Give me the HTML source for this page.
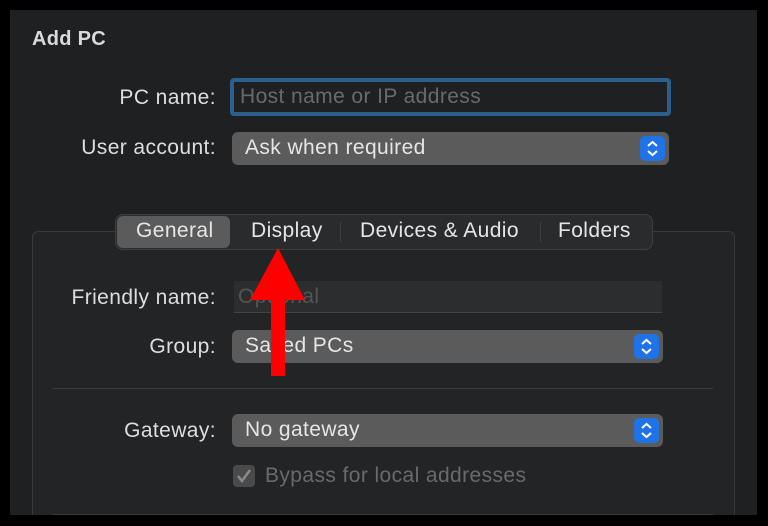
<!DOCTYPE html>
<html><head><style>
*{margin:0;padding:0;box-sizing:border-box}
body{width:768px;height:526px;background:#000;position:relative;overflow:hidden;font-family:"Liberation Sans",sans-serif;color:#dcdcdc}
.a{position:absolute}
.panel{left:10px;top:10px;width:747px;height:505px;background:#1f2022}
.t{font-size:21px;letter-spacing:0.4px}
.lbl{font-size:21px;letter-spacing:0.4px;color:#dedede;text-align:right;width:200px}
.pop{background:#5b5b5b;border-radius:6px;height:33px;font-size:21px;letter-spacing:0.4px;color:#e6e6e6;padding-left:13px;line-height:32px}
.step{position:absolute;right:4px;top:4px;width:25px;height:25px;background:#1f73e6;border-radius:5px}
</style></head><body>
<div class="a panel"></div>
<div class="a" style="left:32px;top:28px;font-size:20px;letter-spacing:0.3px;font-weight:bold;color:#dadada">Add PC</div>

<div class="a lbl" style="left:16px;top:86px">PC name:</div>
<div class="a t" style="left:230px;top:78px;width:441px;height:38px;border:4px solid #2a5f8e;border-radius:4px;background:#1f2022;color:#6a6a6a;padding-left:6px;line-height:30px">Host name or IP address</div>

<div class="a lbl" style="left:16px;top:136px">User account:</div>
<div class="a pop" style="left:232px;top:132px;width:437px">Ask when required<div class="step"><svg width="25" height="25"><path d="M8 10 L12.5 6 L17 10 M8 15 L12.5 19 L17 15" stroke="#fff" stroke-width="2" fill="none"/></svg></div></div>

<div class="a" style="left:32px;top:231px;width:703px;height:284px;border:1px solid #393a3c;border-bottom:none;border-radius:6px 6px 0 0;background:#232426"></div>
<div class="a" style="left:115px;top:214px;width:538px;height:36px;background:#2a2b2d;border:1px solid #3e3f41;border-radius:8px"></div>
<div class="a" style="left:117px;top:216px;width:113px;height:32px;background:#5b5b5b;border-radius:6px"></div>
<div class="a" style="left:340px;top:222px;width:1px;height:20px;background:#3e3f41"></div>
<div class="a" style="left:540px;top:222px;width:1px;height:20px;background:#3e3f41"></div>
<div class="a t" style="left:136px;top:219px;color:#e6e6e6">General</div>
<div class="a t" style="left:251px;top:219px;color:#e6e6e6">Display</div>
<div class="a t" style="left:360px;top:219px;color:#e6e6e6">Devices &amp; Audio</div>
<div class="a t" style="left:558px;top:219px;color:#e6e6e6">Folders</div>

<div class="a lbl" style="left:16px;top:286px">Friendly name:</div>
<div class="a t" style="left:234px;top:281px;width:428px;height:32px;background:#2c2d2f;border-bottom:1px solid #444;color:#555;padding-left:4px;line-height:32px">Optional</div>

<div class="a lbl" style="left:16px;top:335px">Group:</div>
<div class="a pop" style="left:232px;top:330px;width:431px">Saved PCs<div class="step"><svg width="25" height="25"><path d="M8 10 L12.5 6 L17 10 M8 15 L12.5 19 L17 15" stroke="#fff" stroke-width="2" fill="none"/></svg></div></div>

<div class="a" style="left:52px;top:388px;width:661px;height:1px;background:#3b3c3e"></div>

<div class="a lbl" style="left:16px;top:419px">Gateway:</div>
<div class="a pop" style="left:232px;top:414px;width:431px">No gateway<div class="step"><svg width="25" height="25"><path d="M8 10 L12.5 6 L17 10 M8 15 L12.5 19 L17 15" stroke="#fff" stroke-width="2" fill="none"/></svg></div></div>

<div class="a" style="left:233px;top:465px;width:22px;height:22px;background:#4a4a4a;border-radius:4px"><svg width="22" height="22"><path d="M5 11 L9 16 L17 5" stroke="#8a8a8a" stroke-width="2.5" fill="none"/></svg></div>
<div class="a t" style="left:265px;top:464px;color:#6a6a6a">Bypass for local addresses</div>
<div class="a" style="left:52px;top:514px;width:661px;height:1px;background:#3b3c3e"></div>

<svg class="a" style="left:0;top:0" width="768" height="526"><path d="M278 248 L305 300 L285 300 L285 376 L271 376 L271 300 L250 300 Z" fill="#ff0000"/></svg>
</body></html>
